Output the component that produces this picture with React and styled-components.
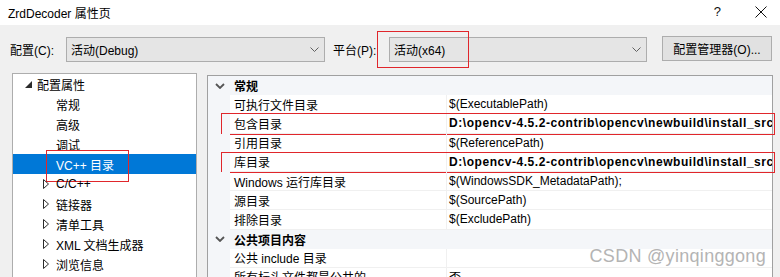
import React from "react";
import styled, { createGlobalStyle } from "styled-components";

const GlobalStyle = createGlobalStyle`
  html, body {
    margin: 0;
    padding: 0;
    background: #f0f0f0;
    overflow: hidden;
  }
  body {
    font-family: "Liberation Sans", "Noto Sans CJK SC", sans-serif;
    font-size: 12px;
    color: #000;
  }
`;

const treeItems = [
  { label: "常规" },
  { label: "高级" },
  { label: "调试" },
  { label: "VC++ 目录", selected: true, marked: true },
  { label: "C/C++", collapsed: true },
  { label: "链接器", collapsed: true },
  { label: "清单工具", collapsed: true },
  { label: "XML 文档生成器", collapsed: true },
  { label: "浏览信息", collapsed: true },
];

const gridRows = [
  { category: "常规" },
  { name: "可执行文件目录", value: "$(ExecutablePath)" },
  { name: "包含目录", value: "D:\\opencv-4.5.2-contrib\\opencv\\newbuild\\install_src\\include", bold: true, marked: true },
  { name: "引用目录", value: "$(ReferencePath)" },
  { name: "库目录", value: "D:\\opencv-4.5.2-contrib\\opencv\\newbuild\\install_src\\x64\\vc16\\lib", bold: true, marked: true },
  { name: "Windows 运行库目录", value: "$(WindowsSDK_MetadataPath);" },
  { name: "源目录", value: "$(SourcePath)" },
  { name: "排除目录", value: "$(ExcludePath)" },
  { category: "公共项目内容" },
  { name: "公共 include 目录", value: "" },
  { name: "所有标头文件都是公共的", value: "否" },
];

const Chevron = () => (
  <svg width="9" height="5" viewBox="0 0 9 5">
    <path d="M0.5 0.5 L4.5 4.5 L8.5 0.5" fill="none" stroke="#606060" strokeWidth="1" />
  </svg>
);

const CategoryChevron = () => (
  <svg width="10" height="6" viewBox="0 0 10 6">
    <path d="M1 1 L5 5 L9 1" fill="none" stroke="#555" strokeWidth="1.8" />
  </svg>
);

const ExpandedArrow = () => (
  <svg width="7" height="7" viewBox="0 0 7 7">
    <path d="M7 0 L7 7 L0 7 Z" fill="#2b2b2b" />
  </svg>
);

const CollapsedArrow = () => (
  <svg width="6" height="10" viewBox="0 0 6 10">
    <path d="M0.5 0.5 L5.5 5 L0.5 9.5 Z" fill="none" stroke="#2b2b2b" strokeWidth="1" />
  </svg>
);

const App = () => {
  return (
    <Window>
      <GlobalStyle />
      <TitleBar>
        <Title>ZrdDecoder 属性页</Title>
        <TitleButtons>
          <HelpMark>?</HelpMark>
          <svg width="12" height="12" viewBox="0 0 12 12">
            <path d="M0.5 0.5 L11.5 11.5 M11.5 0.5 L0.5 11.5" stroke="#111" strokeWidth="1" />
          </svg>
        </TitleButtons>
      </TitleBar>

      <ConfigBar>
        <FieldLabel>配置(C):</FieldLabel>
        <Combo $width={259}>
          <span>活动(Debug)</span>
          <Chevron />
        </Combo>
        <FieldLabel $gap={8}>平台(P):</FieldLabel>
        <Marked>
          <Combo $width={258}>
            <span>活动(x64)</span>
            <Chevron />
          </Combo>
          <PlatformMark />
        </Marked>
        <Button>配置管理器(O)...</Button>
      </ConfigBar>

      <Main>
        <Tree>
          <TreeRow>
            <ArrowSlot $x={12}>
              <ExpandedArrow />
            </ArrowSlot>
            <TreeLabel>配置属性</TreeLabel>
          </TreeRow>
          {treeItems.map((item) => (
            <TreeRow key={item.label} $selected={item.selected}>
              <ArrowSlot $x={30}>{item.collapsed && <CollapsedArrow />}</ArrowSlot>
              <TreeLabel $indent={1} $marked={item.marked}>
                {item.label}
              </TreeLabel>
            </TreeRow>
          ))}
        </Tree>

        <Grid>
          {gridRows.map((row, i) =>
            row.category ? (
              <CategoryRow key={i}>
                <Gutter>
                  <CategoryChevron />
                </Gutter>
                <CategoryName>{row.category}</CategoryName>
              </CategoryRow>
            ) : (
              <GridRow key={i} $marked={row.marked}>
                <Gutter />
                <NameCell>{row.name}</NameCell>
                <ValueCell $bold={row.bold}>{row.value}</ValueCell>
              </GridRow>
            )
          )}
        </Grid>
      </Main>

      <Watermark>CSDN @yinqinggong</Watermark>
    </Window>
  );
};

// Styled Components

const Window = styled.div`
  position: relative;
  width: 780px;
  height: 277px;
  overflow: hidden;
  background: #f0f0f0;
`;

const TitleBar = styled.div`
  height: 25px;
  background: #fff;
  display: flex;
  align-items: center;
  justify-content: space-between;
  padding: 0 13px 0 8px;
`;

const Title = styled.div`
  font-size: 12px;
  padding-bottom: 1px;
`;

const TitleButtons = styled.div`
  display: flex;
  align-items: center;
  gap: 34px;
  padding-bottom: 2px;
`;

const HelpMark = styled.span`
  font-size: 13px;
  color: #111;
`;

const ConfigBar = styled.div`
  height: 48px;
  display: flex;
  align-items: center;
  padding: 0 8px 0 10px;
`;

const FieldLabel = styled.span`
  width: 56px;
  margin-left: ${(p) => p.$gap || 0}px;
`;

const Combo = styled.div`
  box-sizing: border-box;
  width: ${(p) => p.$width}px;
  height: 25px;
  background: #e5e5e5;
  border: 1px solid #adadad;
  display: flex;
  align-items: center;
  justify-content: space-between;
  padding: 0 5px 0 4px;

  svg {
    margin-top: 1px;
  }
`;

const Marked = styled.div`
  position: relative;
`;

const PlatformMark = styled.div`
  position: absolute;
  left: -12px;
  top: -6px;
  width: 92px;
  height: 37px;
  border: 1px solid #e0262b;
  box-sizing: border-box;
  pointer-events: none;
`;

const Button = styled.div`
  box-sizing: border-box;
  margin-left: 15px;
  margin-top: -1px;
  width: 110px;
  height: 25px;
  background: #e1e1e1;
  border: 1px solid #adadad;
  display: flex;
  align-items: center;
  justify-content: center;
`;

const Main = styled.div`
  display: flex;
  align-items: flex-start;
  gap: 10px;
  padding-left: 12px;
`;

const Tree = styled.div`
  box-sizing: border-box;
  width: 185px;
  height: 220px;
  background: #fff;
  border: 1px solid #adadad;
`;

const TreeRow = styled.div`
  position: relative;
  height: 20px;
  display: flex;
  align-items: center;
  background: ${(p) => (p.$selected ? "#0078d7" : "transparent")};
  color: ${(p) => (p.$selected ? "#fff" : "#000")};
`;

const ArrowSlot = styled.div`
  width: ${(p) => p.$x + 12}px;
  box-sizing: border-box;
  padding-left: ${(p) => p.$x}px;
  display: flex;
  align-items: center;
`;

const TreeLabel = styled.span`
  position: relative;
  margin-left: ${(p) => p.$indent || 0}px;

  ${(p) =>
    p.$marked &&
    `
    &::after {
      content: "";
      position: absolute;
      left: -10px;
      top: -6px;
      width: 83px;
      height: 32px;
      border: 1px solid #e0262b;
      box-sizing: border-box;
    }
  `}
`;

const Grid = styled.div`
  box-sizing: border-box;
  margin-top: 2px;
  width: 566px;
  height: 210px;
  background: #fff;
  border: 1px solid #a0a0a0;
  border-bottom: none;
`;

const CategoryRow = styled.div`
  height: 19.2px;
  display: flex;
  align-items: center;
  background: #f4f6f9;
`;

const Gutter = styled.div`
  width: 21px;
  align-self: stretch;
  background: #f4f6f9;
  display: flex;
  align-items: center;
  justify-content: center;
  padding-left: 1px;
  flex-shrink: 0;
`;

const CategoryName = styled.span`
  margin-left: 4px;
  font-weight: bold;
`;

const GridRow = styled.div`
  position: relative;
  height: 19.2px;
  display: flex;

  ${(p) =>
    p.$marked &&
    `
    &::after {
      content: "";
      position: absolute;
      left: 13px;
      right: -3px;
      top: -1px;
      bottom: -1px;
      border: 1px solid #e0262b;
    }
  `}
`;

const NameCell = styled.div`
  box-sizing: border-box;
  width: 217px;
  padding-left: 4px;
  display: flex;
  align-items: center;
  border-bottom: 1px solid #f0f0f0;
  border-right: 1px solid #f0f0f0;
  white-space: nowrap;
`;

const ValueCell = styled.div`
  flex: 1;
  min-width: 0;
  padding-left: 2px;
  display: flex;
  align-items: center;
  border-bottom: 1px solid #f0f0f0;
  white-space: nowrap;
  overflow: hidden;
  font-weight: ${(p) => (p.$bold ? "bold" : "normal")};
  letter-spacing: ${(p) => (p.$bold ? "0.55px" : "normal")};
`;

const Watermark = styled.div`
  position: absolute;
  right: 14px;
  top: 246px;
  font-size: 18px;
  color: #b4b4b4;
  letter-spacing: 0.3px;
  pointer-events: none;
`;

export default App;
